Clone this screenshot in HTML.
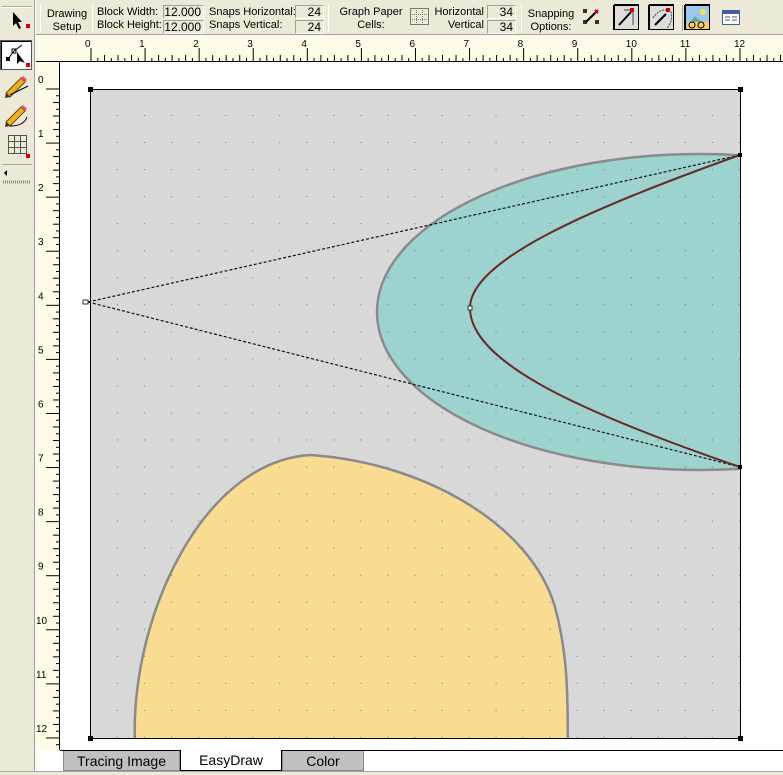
<!DOCTYPE html>
<html><head><meta charset="utf-8"><style>
*{margin:0;padding:0;box-sizing:border-box}
body{width:783px;height:775px;overflow:hidden;background:#fff;font-family:"Liberation Sans",sans-serif;position:relative}
.abs{position:absolute}
#lt{left:0;top:0;width:35px;height:775px;background:#ece9d8;border-right:1px solid #a0a0a0}
#tb{left:36px;top:0;width:747px;height:35px;background:#ece9d8;border-bottom:1px solid #a0a0a0;font-size:11px;color:#000}
.t{position:absolute;white-space:nowrap;line-height:13px}
.box{position:absolute;border:1px solid #a0a0a0;border-right-color:#fff;border-bottom-color:#fff;text-align:right;padding-right:2px;font-size:12px;line-height:13px;background:#ece9d8}
.sep{position:absolute;top:4px;width:1px;height:28px;background:#aca899;border-right:1px solid #fff}
#hr{left:36px;top:35px;width:747px;height:27px;background:#fffbe6}
#vr{left:36px;top:62px;width:24px;height:688px;background:#fffbe6;border-right:1px solid #000}
.tab{position:absolute;top:751px;height:20px;font-size:14px;text-align:center;line-height:20px}
</style></head><body>
<div id="lt" class="abs">
<div class="abs" style="left:2px;top:6px;width:30px;height:2px;border-top:1px solid #aca899;border-bottom:1px solid #fff"></div>
<svg class="abs" style="left:0;top:0" width="35" height="190">
<path d="M13 12 L13 26 L16 23 L19 29 L21 28 L18 22 L22 22 Z" fill="#000"/>
<rect x="26" y="24" width="4" height="4" fill="#d00"/>
<rect x="1.5" y="41.5" width="30" height="28" fill="#fff" stroke="#000"/>
<rect x="0.5" y="40.5" width="31" height="29" fill="none" stroke="#555"/>
<path d="M8 59 L14 51 L22 45" stroke="#000" fill="none"/>
<rect x="12" y="49" width="4" height="4" fill="none" stroke="#000"/>
<rect x="6" y="57" width="4" height="4" fill="#000"/>
<path d="M17 52 L17 64 L20 61 L25 63 Z" fill="#000"/>
<rect x="26" y="63" width="4" height="4" fill="#d00"/>
<path d="M6 93 L21 78 L25 82 L10 97 Z" fill="#f0b020" stroke="#6a4a00"/>
<path d="M21 78 L23 76 L27 80 L25 82 Z" fill="#e05070"/>
<path d="M6 93 L5 98 L10 97 Z" fill="#333"/>
<path d="M10 95 L28 86" stroke="#000"/>
<path d="M6 122 L21 107 L25 111 L10 126 Z" fill="#f0b020" stroke="#6a4a00"/>
<path d="M21 107 L23 105 L27 109 L25 111 Z" fill="#e05070"/>
<path d="M6 122 L5 127 L10 126 Z" fill="#333"/>
<path d="M10 126 Q24 126 27 117" stroke="#000" fill="none"/>
<g stroke="#555" fill="none"><rect x="8.5" y="135.5" width="18" height="18"/><path d="M14.5 135v18M20.5 135v18M8 141.5h18M8 147.5h18"/></g>
<rect x="26" y="154" width="4" height="4" fill="#d00"/>
<path d="M2 164.5h30" stroke="#aca899"/>
<path d="M4 173 L7 170 L7 176 Z" fill="#000"/>
<path d="M3 182h28" stroke="#888" stroke-dasharray="1 1" stroke-width="3"/>
</svg>
</div>
<div id="tb" class="abs">
<div class="sep" style="left:4px"></div>
<div class="t" style="left:9px;top:8px;text-align:center;width:44px">Drawing<br>Setup</div>
<div class="sep" style="left:56px"></div>
<div class="t" style="left:61px;top:6px">Block Width:<br>Block Height:</div>
<div class="box" style="left:127px;top:5px;width:41px;height:14px">12.000</div>
<div class="box" style="left:127px;top:20px;width:41px;height:14px">12.000</div>
<div class="t" style="left:173px;top:6px">Snaps Horizontal:<br>Snaps Vertical:</div>
<div class="box" style="left:259px;top:5px;width:29px;height:14px">24</div>
<div class="box" style="left:259px;top:20px;width:29px;height:14px">24</div>
<div class="sep" style="left:292px"></div>
<div class="t" style="left:301px;top:6px;text-align:center;width:68px">Graph Paper<br>Cells:</div>
<svg class="abs" style="left:373px;top:6px" width="22" height="22"><g stroke="#777" fill="none" stroke-width="1"><rect x="1.5" y="2.5" width="18" height="16"/><path d="M7.5 2v17M13.5 2v17M1 8.5h19M1 13.5h19" stroke-dasharray="1 1"/></g></svg>
<div class="t" style="left:398px;top:6px;text-align:right;width:50px">Horizontal<br>Vertical</div>
<div class="box" style="left:451px;top:5px;width:29px;height:14px">34</div>
<div class="box" style="left:451px;top:20px;width:29px;height:14px">34</div>
<div class="sep" style="left:485px"></div>
<div class="t" style="left:490px;top:8px;text-align:center;width:50px">Snapping<br>Options:</div>
<svg class="abs" style="left:540px;top:0" width="207" height="35">
<g fill="#333"><rect x="7" y="20" width="4" height="4"/><rect x="19" y="20" width="4" height="4"/><rect x="7" y="9" width="4" height="4"/></g>
<path d="M10 22 L19 13" stroke="#000" stroke-width="2"/><path d="M19 10 L22 13" stroke="#c00" stroke-width="2"/><path d="M22 10 L19 13" stroke="#c00" stroke-width="2"/>
<g transform="translate(-37,0)">
<rect x="75.5" y="5.5" width="24" height="24" fill="#ddd" stroke="#000"/><path d="M75 5h25M75 5v25" stroke="#000" stroke-width="2"/>
<path d="M80 25 L92 12" stroke="#000" stroke-width="2"/><path d="M85 10 L94 10 L94 25" stroke="#444" fill="none"/><rect x="91" y="8" width="4" height="4" fill="#c00"/>
<rect x="110.5" y="5.5" width="24" height="24" fill="#ddd" stroke="#000"/><path d="M110 5h25M110 5v25" stroke="#000" stroke-width="2"/>
<path d="M116 25 L127 14" stroke="#000" stroke-width="2"/><path d="M114 18 Q122 6 132 12 Q134 22 128 28" stroke="#444" fill="none" stroke-dasharray="2 1"/><rect x="127" y="8" width="4" height="4" fill="#c00"/>
<rect x="143" y="5" width="1" height="26" fill="#aca899"/>
<rect x="146.5" y="5.5" width="24" height="24" fill="#9cc8ef" stroke="#000"/><path d="M146 5h25M146 5v25" stroke="#000" stroke-width="2"/>
<path d="M148 26 L156 16 L164 24 Z" fill="#6a9"/><circle cx="164" cy="12" r="3" fill="#fd4"/><path d="M148 22h22v7h-22z" fill="#fc6"/>
<circle cx="153" cy="25" r="3" fill="none" stroke="#000"/><circle cx="162" cy="25" r="3" fill="none" stroke="#000"/>
<rect x="183.5" y="10.5" width="17" height="14" fill="#fff" stroke="#4060a0"/><rect x="184" y="11" width="16" height="3" fill="#4060a0"/>
<path d="M186 17h5M186 20h5M193 17h5M193 20h5" stroke="#555"/>
</g>
</svg>
</div>
<div id="hr" class="abs"><svg width="747" height="27" id="hs"></svg></div>
<div class="abs" style="left:36px;top:61px;width:747px;height:1px;background:#000"></div>
<div id="vr" class="abs"><svg width="24" height="688" id="vs"></svg></div>
<svg class="abs" style="left:60px;top:62px" width="723" height="688">
<defs><clipPath id="c"><rect x="31" y="27" width="649" height="649"/></clipPath>
<pattern id="d" x="31" y="27" width="27.04" height="27.04" patternUnits="userSpaceOnUse"><rect x="26" y="26" width="1" height="1" fill="#555"/></pattern></defs>
<rect x="31" y="27" width="649" height="649" fill="#d8d8d8"/>
<g clip-path="url(#c)">
<ellipse cx="640" cy="250" rx="323" ry="158" fill="#9dd3ce" stroke="#8a8a8a" stroke-width="2.5"/>
<path d="M75 680 C70 560 140 400 250 393 C360 400 470 460 495 545 C510 600 507 650 508 680 Z" fill="#f9dc92" stroke="#8a8a8a" stroke-width="2.5"/>
</g>
<rect x="31" y="27" width="649" height="649" fill="url(#d)" opacity="0.8"/>
<rect x="30.5" y="27.5" width="650" height="649" fill="none" stroke="#000"/>
<path d="M28 240 L680 93 M28 240 L680 405" stroke="#111" stroke-dasharray="3 2" stroke-width="1.2" fill="none"/>
<path d="M680 93 C520 150 410 200 410 246 C410 300 520 350 680 405" stroke="#6a2a2a" stroke-width="2" fill="none"/>
<rect x="408" y="244" width="4" height="4" fill="#fff" stroke="#333"/>
<rect x="23" y="238" width="5" height="4" fill="#fff" stroke="#333"/>
<g fill="#000"><rect x="28" y="25" width="5" height="5"/><rect x="678" y="25" width="5" height="5"/><rect x="678" y="674" width="5" height="5"/><rect x="28" y="674" width="5" height="5"/><rect x="678" y="91" width="4" height="4"/><rect x="678" y="403" width="4" height="4"/></g>
</svg>
<div class="abs" style="left:60px;top:750px;width:723px;height:21px;background:#fff;border-top:1px solid #000"></div>
<div class="tab" style="left:63px;width:117px;background:#c0c0c0;border:1px solid #888;border-top:none">Tracing Image</div>
<div class="tab" style="left:180px;width:102px;background:#fff;border:1px solid #000;border-top:none;top:750px;height:21px">EasyDraw</div>
<div class="tab" style="left:282px;width:82px;background:#c0c0c0;border:1px solid #888;border-top:none">Color</div>
<div class="abs" style="left:0;top:771px;width:783px;height:4px;background:#ece9d8;border-top:1px solid #aca899"></div>
<script>
var s=54.08,h='',v='';
for(var i=0;i<=13*8;i++){var x=55+i*s/8;var m=i%8==0,hh=i%2==0;var L=m?14:(hh?7:4);
h+='<line x1="'+x+'" y1="'+(27-L)+'" x2="'+x+'" y2="27" stroke="#000"/>';
if(m)h+='<text x="'+(x-6)+'" y="12" font-size="10" font-family="Liberation Sans">'+(i/8)+'</text>';
var y=27+i*s/8;if(y<688){v+='<line x1="'+(24-L)+'" y1="'+y+'" x2="24" y2="'+y+'" stroke="#000"/>';
if(m)v+='<text x="'+(i/8>=10?0:2)+'" y="'+(y-6)+'" font-size="10" font-family="Liberation Sans">'+(i/8)+'</text>';}}
h+='<line x1="0" y1="26.5" x2="747" y2="26.5" stroke="#000"/>';
document.getElementById('hs').innerHTML=h;document.getElementById('vs').innerHTML=v;
</script>
</body></html>
